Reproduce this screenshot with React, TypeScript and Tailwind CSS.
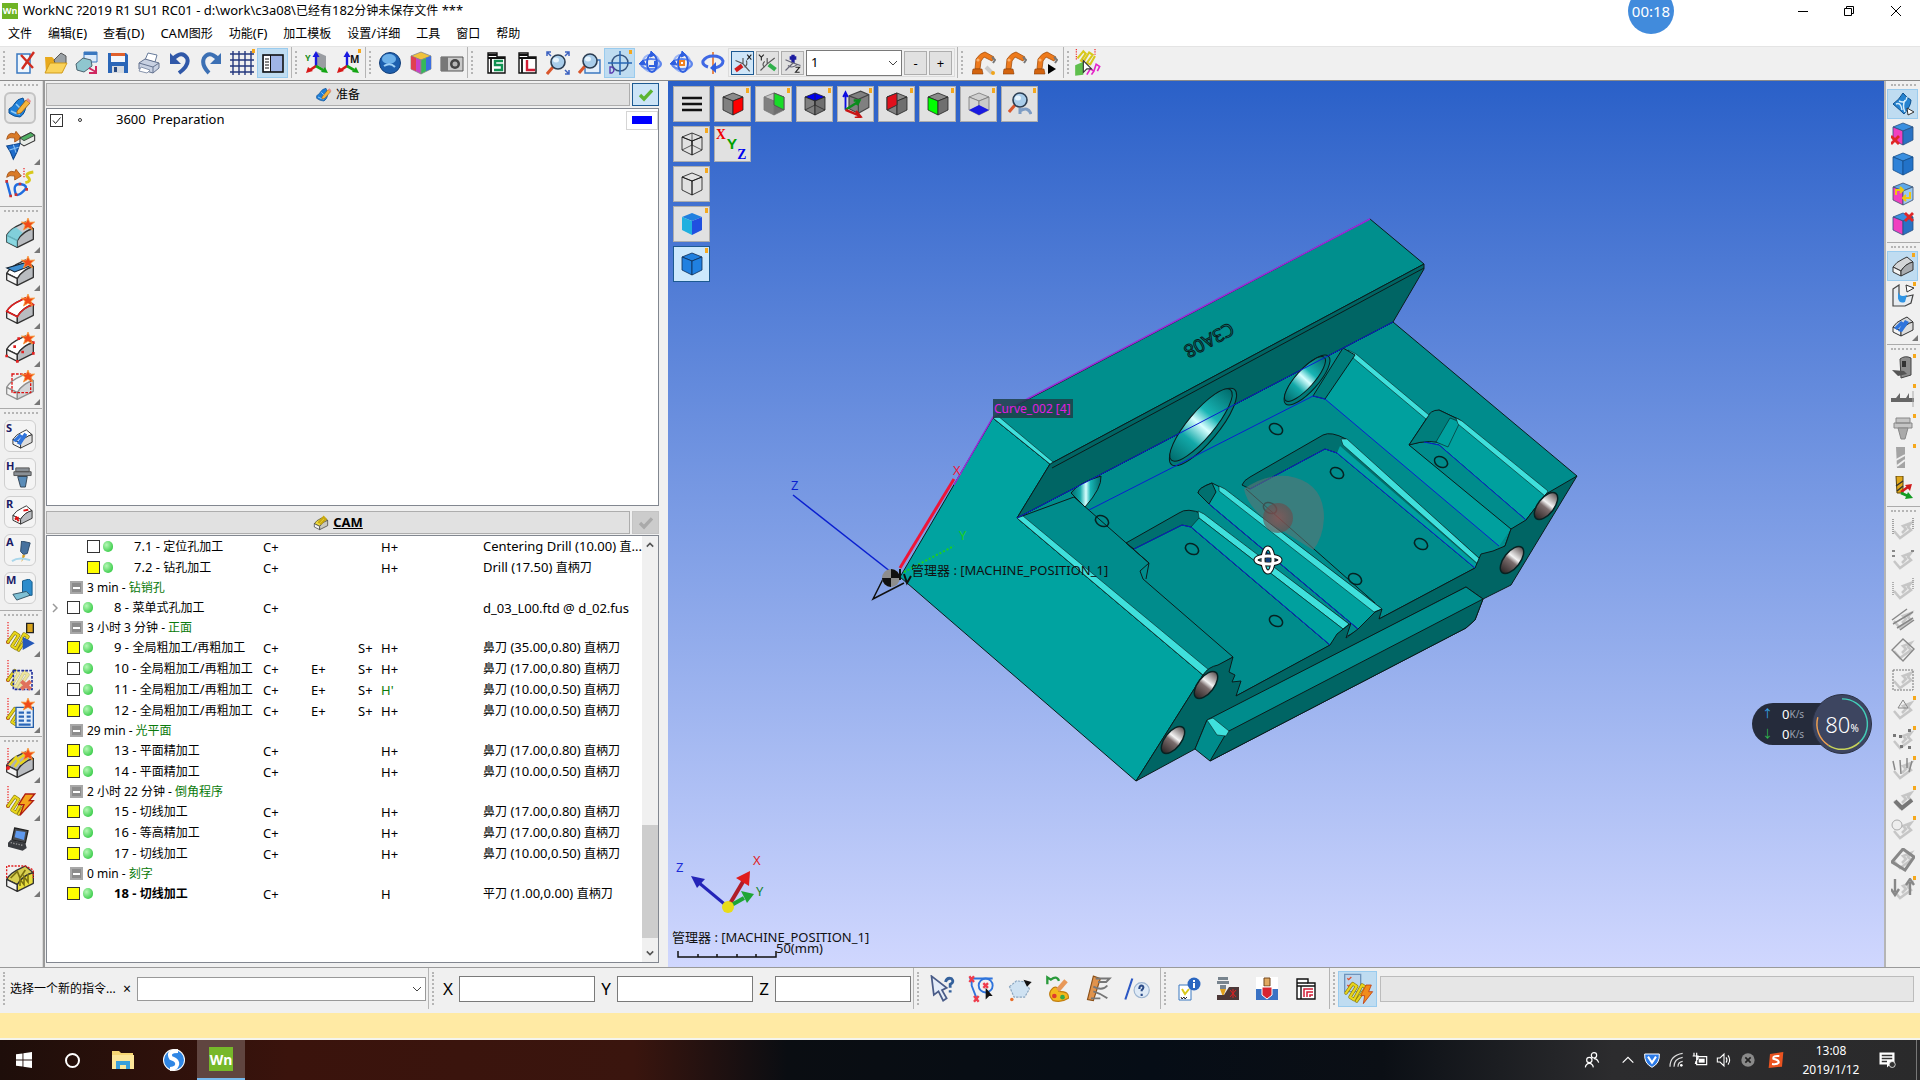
import type { ReactNode } from 'react';

interface Operation {
  kind: 'op';
  no: string;
  name: string;
  filled?: boolean;
  nested?: boolean;
  expandable?: boolean;
  current?: boolean;
  e?: string;
  s?: string;
  h?: string;
  tool: string;
}

interface Group {
  kind: 'group';
  time: string;
  name: string;
}

const rows: (Operation | Group)[] = [
  { kind: 'op', no: '7.1', name: '定位孔加工', nested: true, h: 'H+', tool: 'Centering Drill (10.00) 直...' },
  { kind: 'op', no: '7.2', name: '钻孔加工', nested: true, filled: true, h: 'H+', tool: 'Drill (17.50) 直柄刀' },
  { kind: 'group', time: '3 min', name: '钻销孔' },
  { kind: 'op', no: '8', name: '菜单式孔加工', expandable: true, tool: 'd_03_L00.ftd @ d_02.fus' },
  { kind: 'group', time: '3 小时 3 分钟', name: '正面' },
  { kind: 'op', no: '9', name: '全局粗加工/再粗加工', filled: true, s: 'S+', h: 'H+', tool: '鼻刀 (35.00,0.80) 直柄刀' },
  { kind: 'op', no: '10', name: '全局粗加工/再粗加工', e: 'E+', s: 'S+', h: 'H+', tool: '鼻刀 (17.00,0.80) 直柄刀' },
  { kind: 'op', no: '11', name: '全局粗加工/再粗加工', e: 'E+', s: 'S+', h: "H'", tool: '鼻刀 (10.00,0.50) 直柄刀' },
  { kind: 'op', no: '12', name: '全局粗加工/再粗加工', filled: true, e: 'E+', s: 'S+', h: 'H+', tool: '鼻刀 (10.00,0.50) 直柄刀' },
  { kind: 'group', time: '29 min', name: '光平面' },
  { kind: 'op', no: '13', name: '平面精加工', filled: true, h: 'H+', tool: '鼻刀 (17.00,0.80) 直柄刀' },
  { kind: 'op', no: '14', name: '平面精加工', filled: true, h: 'H+', tool: '鼻刀 (10.00,0.50) 直柄刀' },
  { kind: 'group', time: '2 小时 22 分钟', name: '倒角程序' },
  { kind: 'op', no: '15', name: '切线加工', filled: true, h: 'H+', tool: '鼻刀 (17.00,0.80) 直柄刀' },
  { kind: 'op', no: '16', name: '等高精加工', filled: true, h: 'H+', tool: '鼻刀 (17.00,0.80) 直柄刀' },
  { kind: 'op', no: '17', name: '切线加工', filled: true, h: 'H+', tool: '鼻刀 (10.00,0.50) 直柄刀' },
  { kind: 'group', time: '0 min', name: '刻字' },
  { kind: 'op', no: '18', name: '切线加工', filled: true, current: true, h: 'H', tool: '平刀 (1.00,0.00) 直柄刀' },
];

const menus = ['文件', '编辑(E)', '查看(D)', 'CAM图形', '功能(F)', '加工模板', '设置/详细', '工具', '窗口', '帮助'];

// Chinese runs are set one size smaller than the Latin text around them
function Mixed({ text }: { text: string }) {
  return text.split(/([\u4e00-\u9fff]+)/).map((part, i) =>
    i % 2 ? (
      <span key={i} className="text-[12px]">
        {part}
      </span>
    ) : (
      part
    ),
  );
}

/* ---------- icons ---------- */

function Icon({ children, size = 'size-6' }: { children: ReactNode; size?: string }) {
  return (
    <svg viewBox="0 0 24 24" className={`${size} shrink-0`} fill="none" aria-hidden="true">
      {children}
    </svg>
  );
}

function CubeShape({ top = '#8a8a8a', left = '#808080', right = '#6f6f6f', stroke = '#222' }) {
  return (
    <g stroke={stroke} strokeWidth="0.8" strokeLinejoin="round">
      <path d="M12 1 22 5 12 9 2 5Z" fill={top} />
      <path d="M2 5 12 9V23L2 18Z" fill={left} />
      <path d="M22 5 12 9V23L22 18Z" fill={right} />
    </g>
  );
}

function HiddenEdges() {
  return <path d="M2 18 12 13 22 18M12 13V1" stroke="#222" strokeWidth="0.7" />;
}

function BlockShape({ side = '#fff', front = '#b9bcc0' }) {
  return (
    <g stroke="#333" strokeWidth="1" strokeLinejoin="round">
      <path d="M2 13Q5 8 12 5L16 3 22 8Q14 10 10 17Z" fill={side} />
      <path d="M2 13 10 17V22L2 18Z" fill="#f4f4f4" />
      <path d="M10 17Q14 10 22 8V16L10 22Z" fill={front} />
    </g>
  );
}

const Star = () => (
  <path d="M18 0 19.3 3.2 23 3 20.2 5.4 21.4 9 18 7 14.6 9 15.8 5.4 13 3 16.7 3.2Z" fill="#f04a18" stroke="#f9a03c" strokeWidth="0.6" />
);

function PathShape({ color = '#e8d51c', edge = '#8d7f10' }) {
  return (
    <g strokeLinejoin="round" strokeLinecap="round">
      <path d="M3 15 8 8 11 10 6 18 9 20 15 9 18 11 11 21" stroke={edge} strokeWidth="2.6" />
      <path d="M3 15 8 8 11 10 6 18 9 20 15 9 18 11 11 21" stroke={color} strokeWidth="1.6" />
    </g>
  );
}

const RedGuide = () => (
  <>
    <path d="M3 0V13" stroke="#e33" strokeDasharray="1 1" />
    <circle cx="3" cy="15" r="1.5" fill="#e22" />
  </>
);

const Lens = ({ x = 13, y = 9 }) => (
  <>
    <path d={`M${x - 5} ${y + 5}L${x - 11} ${y + 12}`} stroke="#d9562c" strokeWidth="3" />
    <circle cx={x} cy={y} r="7" fill="#a9cdea" stroke="#2b3d52" strokeWidth="1.6" />
    <ellipse cx={x - 2} cy={y - 2} rx="3" ry="2.5" fill="#e6f3fc" />
  </>
);

const Orbit = ({ dot = false }) => (
  <g stroke="#2f5fe0" strokeWidth="2">
    <circle cx="12" cy="12" r="8.5" stroke="#9db6f4" />
    <ellipse cx="12" cy="13" rx="10" ry="5" stroke="#5f86ec" />
    <ellipse cx="13" cy="12" rx="5" ry="9" />
    <path d="M12 0 16 4 11 6ZM0 13 4 9 7 14Z" fill="#2f5fe0" strokeWidth="1" />
    {dot ? <rect x="10" y="10" width="4" height="4" fill="#fff" stroke="#f08020" /> : <path d="M10 15H16V10" />}
  </g>
);

const Robot = ({ children }: { children?: ReactNode }) => (
  <Icon>
    <path d="M3 18 4 8Q8 2 13 1L22 6 20 10 12 6 9 10 8 18Z" fill="#ee7a1c" stroke="#a4500f" strokeWidth="0.8" />
    <circle cx="6" cy="9" r="1.6" fill="#fbb06c" />
    <path d="M1 18H10L11 23H0Z" fill="#d3640f" stroke="#8a3c08" strokeWidth="0.6" />
    <path d="M20 6 23 9 21 12" stroke="#777" strokeWidth="2" />
    {children}
  </Icon>
);

const Xyz = ({ letter }: { letter?: string }) => (
  <>
    <path d="M11 15V3" stroke="#1a1ae0" strokeWidth="2.4" />
    <path d="M11 0 14.5 6H7.5Z" fill="#1a1ae0" />
    <path d="M11 15 5 19" stroke="#d81818" strokeWidth="2.6" />
    <path d="M1 22 3 16 8 20Z" fill="#d81818" />
    <path d="M11 15 18 19" stroke="#14a514" strokeWidth="2.6" />
    <path d="M23 22 20 16 16 21Z" fill="#14a514" />
    {letter && <text x="14" y="12" fontSize="10" fontWeight="bold" fill="#111">{letter}</text>}
  </>
);

const PenShape = () => (
  <>
    <path d="M1 13Q5 11 7 7T15 2L18 10Q17 18 12 21 6 21 1 17Z" fill="#1e7fd8" stroke="#0c4f94" />
    <path d="M3 15Q8 18 12 18M8 8 13 13" stroke="#8fcaf6" strokeWidth="1.5" />
    <path d="M9 15 18 4 22 7 13 17 9 18Z" fill="#f6b53c" stroke="#9a5c0d" strokeWidth="0.8" />
    <path d="M18 4 20 2 23 5 22 7Z" fill="#e88f8f" />
  </>
);

const Check = ({ color }: { color: string }) => (
  <svg viewBox="0 0 24 24" className="size-4" fill="none" aria-hidden="true">
    <path d="M3 12 9 18 21 5" stroke={color} strokeWidth="5" />
  </svg>
);

const CrossMark = ({ x, y }: { x: number; y: number }) => (
  <path d={`M${x} ${y}l8 8m0-8l-8 8`} stroke="#e02626" strokeWidth="2.8" />
);

const Screen = ({ color, letter }: { color: string; letter: string }) => (
  <Icon>
    <path d="M4 2H13V6H21V22H4Z" fill="#fff" stroke="#111" strokeWidth="1.4" />
    <path d="M4 4H13M4 7H21M7 7V22" stroke="#111" strokeWidth="1.8" />
    <path d={letter === 'S' ? 'M19 10H11V14H18V19H10' : 'M12 9V19H20'} stroke={color} strokeWidth="2.4" />
  </Icon>
);

/* ---------- toolbar pieces ---------- */

function Grip({ vertical = false }: { vertical?: boolean }) {
  return vertical ? (
    <span className="mx-1 my-[3px] block border-t-2 border-dotted border-[#b5b5b5]" />
  ) : (
    <span className="mx-[3px] my-1 block self-stretch border-l-2 border-dotted border-[#b5b5b5]" />
  );
}

function Divider({ vertical = false }: { vertical?: boolean }) {
  return vertical ? (
    <span className="mt-[3px] block h-px w-full shrink-0 bg-[#ababab]" />
  ) : (
    <span className="block w-px shrink-0 self-stretch bg-[#b5b5b5]" />
  );
}

interface ToolProps {
  label: string;
  active?: boolean;
  mark?: boolean;
  corner?: boolean;
  shape: string;
  children: ReactNode;
}

function Tool({ label, active, mark, corner, shape, children }: ToolProps) {
  return (
    <button
      type="button"
      aria-label={label}
      className={`relative flex shrink-0 items-center justify-center ${shape} ${
        active ? 'border border-[#99cbee] bg-[#bfdcf1]' : ''
      }`}
    >
      {children}
      {mark && <span className="absolute top-px right-0.5 h-1 w-[3px] bg-[#f5a81c]" />}
      {corner && (
        <span className="absolute right-0 bottom-0 border-b-[6px] border-l-[6px] border-b-[#777] border-l-transparent" />
      )}
    </button>
  );
}

const TOP = 'h-[30px] w-[31px]';
const LEFT = 'h-[38px] w-10';
const RIGHT = 'h-[30px] w-[31px]';
const BOTTOM = 'h-9 w-[39px]';

function TitleBar() {
  return (
    <header className="relative flex h-[22px] shrink-0 items-center bg-white pl-0.5">
      <span className="flex size-4 items-center justify-center bg-[#6fb424] text-[9px] font-bold text-white">Wn</span>
      <h1 className="ml-[5px] flex-1 text-[13px] whitespace-pre">
        <Mixed text="WorkNC ?2019 R1 SU1 RC01 - d:\work\c3a08\已经有182分钟未保存文件 ***" />
      </h1>
      <div className="flex">
        <button type="button" aria-label="最小化" className="flex h-[22px] w-[46px] items-center justify-center">
          <span className="h-px w-2.5 bg-black" />
        </button>
        <button type="button" aria-label="还原" className="flex h-[22px] w-[46px] items-center justify-center">
          <svg viewBox="0 0 12 12" className="size-3" fill="none" stroke="#000">
            <path d="M1.5 3.5H8.5V10.5H1.5ZM3.5 3.5V1.5H10.5V8.5H8.5" />
          </svg>
        </button>
        <button type="button" aria-label="关闭" className="flex h-[22px] w-12 items-center justify-center">
          <svg viewBox="0 0 12 12" className="size-3" fill="none" stroke="#000">
            <path d="M1 1 11 11M11 1 1 11" />
          </svg>
        </button>
      </div>
      {/* recorder timer floats over the title bar */}
      <div className="absolute -top-3 left-[1628px] z-10 flex size-[46px] items-center justify-center rounded-full bg-[#418bdc] text-[15px] text-white">
        00:18
      </div>
    </header>
  );
}

function MenuBar() {
  return (
    <nav className="flex h-6 shrink-0 items-center gap-4 bg-white pl-2 text-[13px]">
      {menus.map((m) => (
        <button key={m} type="button" className="whitespace-nowrap">
          <Mixed text={m} />
        </button>
      ))}
    </nav>
  );
}

function TopToolbar() {
  return (
    <div className="flex h-[34px] shrink-0 items-center border-t border-[#e4e4e4] bg-[#f0f0f0] pb-0.5">
      <Grip />
      <div className="flex pr-[3px] pl-px">
        <Tool label="新建" shape={TOP}>
          <Icon>
            <path d="M4 3H17V22H4Z" fill="#eef6fd" stroke="#3a78c0" strokeWidth="1.5" />
            <path d="M8 4 20 17M21 1 9 18" stroke="#d02c20" strokeWidth="2.4" />
          </Icon>
        </Tool>
        <Tool label="打开" shape={TOP}>
          <Icon>
            <path d="M1 6H8L10 8H17V22H2Z" fill="#e8a91c" />
            <path d="M10 9 17 2 22 5V12L12 15Z" fill="#9aa1a6" stroke="#555" />
            <path d="M1 22 6 12H23L18 22Z" fill="#fad35a" stroke="#d09a18" />
          </Icon>
        </Tool>
        <Tool label="导出" shape={TOP}>
          <Icon>
            <path d="M9 1H22V11H9Z" fill="#dcebfa" stroke="#3a78c0" />
            <path d="M9 2.5H22" stroke="#3a78c0" strokeWidth="3" />
            <path d="M1 13 8 7 16 9 17 15 9 21 2 19Z" fill="#8fc6cf" stroke="#4b6470" />
            <path d="M14 17 21 21M21 15V22H14" stroke="#d02860" strokeWidth="2" />
          </Icon>
        </Tool>
        <Tool label="保存" shape={TOP}>
          <Icon>
            <path d="M2 2H20L22 4V22H2Z" fill="#2a66b8" />
            <path d="M5 2H19V11H5Z" fill="#f4f7fb" />
            <path d="M5 3.5H19" stroke="#e0602c" strokeWidth="3" />
            <path d="M6 15H18V22H6Z" fill="#d5dae0" />
            <path d="M8 16H11V21H8Z" fill="#2a4a80" />
          </Icon>
        </Tool>
        <Tool label="打印" shape={TOP}>
          <Icon>
            <path d="M8 9 11 2 20 4 18 11Z" fill="#fff" stroke="#667a9a" />
            <path d="M2 12 8 8 22 12V17L16 22 2 18Z" fill="#c8d1e2" stroke="#64738f" />
            <path d="M2 12 16 16V22M16 16 22 12" stroke="#64738f" />
            <path d="M4 16 13 19 10 22 2 20Z" fill="#fff" stroke="#8895ad" />
          </Icon>
        </Tool>
        <Tool label="撤销" shape={TOP}>
          <Icon>
            <path d="M5 8Q14-1 19 7 22 14 11 22" stroke="#3058a8" strokeWidth="4" />
            <path d="M2 2V13H13Z" fill="#3058a8" />
          </Icon>
        </Tool>
        <Tool label="重做" shape={TOP}>
          <Icon>
            <path d="M19 8Q10-1 5 7 2 14 10 22" stroke="#3c70b4" strokeWidth="4" />
            <path d="M22 2V13H11Z" fill="#3c70b4" />
          </Icon>
        </Tool>
        <Tool label="网格" mark shape={TOP}>
          <Icon>
            <path d="M3 0V24M9 0V24M15 0V24M21 0V24M0 3H24M0 9H24M0 15H24M0 21H24" stroke="#25387e" strokeWidth="1.4" />
          </Icon>
        </Tool>
        <Tool label="面板" active shape={TOP}>
          <Icon>
            <rect x="2" y="4" width="20" height="17" fill="#9fb4e6" stroke="#111" strokeWidth="1.6" />
            <rect x="3" y="5" width="6" height="15" fill="#fff" />
            <path d="M4 8H8M4 11H8M4 14H8M4 17H8M9.5 4V21" stroke="#111" />
          </Icon>
        </Tool>
      </div>
      <Divider />
      <Grip />
      <div className="flex pr-0.5 pl-px">
        <Tool label="YZ 视图" shape={TOP}>
          <Icon>
            <path d="M12 1 21 5V19L12 14Z" fill="#9a9da2" />
            <Xyz />
            <text x="0" y="10" fontSize="9" fontWeight="bold" fill="#1b8f1b">Y</text>
          </Icon>
        </Tool>
        <Tool label="机床坐标" mark shape={TOP}>
          <Icon>
            <Xyz letter="M" />
          </Icon>
        </Tool>
      </div>
      <Divider />
      <Grip />
      <div className="flex">
        <Tool label="渲染" shape={TOP}>
          <Icon>
            <circle cx="12" cy="12" r="10.5" fill="#1d5fae" stroke="#123f7a" />
            <ellipse cx="11" cy="8" rx="7" ry="5" fill="#6db1ea" />
            <path d="M6 15Q12 11 17 16" stroke="#9fd0f5" strokeWidth="2" />
          </Icon>
        </Tool>
        <Tool label="颜色" shape={TOP}>
          <Icon>
            <CubeShape top="#f0c23a" left="#c842c8" right="#35b95a" stroke="#888" />
            <path d="M2 5 7 7V20L2 18Z" fill="#e04050" />
            <path d="M17 7 22 5V18L17 20Z" fill="#3b6ee0" />
          </Icon>
        </Tool>
        <Tool label="截图" shape={TOP}>
          <Icon>
            <path d="M1 6H23V20H1Z" fill="#c9c9c9" stroke="#555" />
            <path d="M1 6H8V20H1Z" fill="#777" />
            <circle cx="15" cy="13" r="5" fill="#444" />
            <circle cx="15" cy="13" r="2.5" fill="#b5b5b5" />
          </Icon>
        </Tool>
      </div>
      <Divider />
      <Grip />
      <div className="flex pl-1">
        <Tool label="S 列表" shape={TOP}>
          <Screen color="#0f9150" letter="S" />
        </Tool>
        <Tool label="L 列表" shape={TOP}>
          <Screen color="#d11d34" letter="L" />
        </Tool>
        <Tool label="全部缩放" shape={TOP}>
          <Icon>
            <Lens x={12} y={11} />
            <path d="M1 1 5 5M1 5V1H5M23 1 19 5M19 1H23V5M23 23 19 19M23 19V23H19" stroke="#3b61c0" strokeWidth="1.5" />
          </Icon>
        </Tool>
        <Tool label="窗口缩放" shape={TOP}>
          <Icon>
            <path d="M12 9H23V22H8V17" fill="#e4effa" stroke="#3b78c0" strokeWidth="1.4" />
            <Lens x={13} y={10} />
          </Icon>
        </Tool>
        <Tool label="旋转中心" active mark shape={TOP}>
          <Icon>
            <circle cx="12" cy="12" r="8" stroke="#35537e" strokeWidth="1.5" />
            <path d="M12 0V24M0 12H24" stroke="#2867b5" strokeWidth="1.5" />
            <path d="M2 16H4Q8 19 4 22H2Z" stroke="#5a3ab0" strokeWidth="1.4" />
          </Icon>
        </Tool>
        <Tool label="动态旋转" shape={TOP}>
          <Icon>
            <Orbit />
          </Icon>
        </Tool>
        <Tool label="中心旋转" shape={TOP}>
          <Icon>
            <Orbit dot />
          </Icon>
        </Tool>
        <Tool label="轴旋转" shape={TOP}>
          <Icon>
            <path d="M12 1V23" stroke="#e88a50" strokeWidth="2" />
            <path d="M7 16Q1 14 2 10 5 5 12 5 20 5 22 10 22 15 14 17" stroke="#3f68e4" strokeWidth="3" />
            <path d="M15 11V22L9 17Z" fill="#2f5fe0" />
          </Icon>
        </Tool>
      </div>
      <div className="mr-0.5 flex items-center gap-0.5 border border-[#dcdcdc] px-0.5">
        <button type="button" aria-label="X 轴" className="flex h-6 w-[23px] items-center justify-center border border-[#1d5a92] bg-[#cfe6f8]">
          <Icon size="size-5">
            <path d="M3 21 11 15" stroke="#d21c1c" strokeWidth="5" />
            <path d="M3 9 12 13 20 22M12 13V6M14 17Q18 14 16 9" stroke="#555" strokeWidth="1.4" />
            <path d="M17 2 22 8M22 2 17 8" stroke="#222" strokeWidth="1.3" />
          </Icon>
        </button>
        <button type="button" aria-label="Y 轴" className="flex h-6 w-[23px] items-center justify-center border border-[#adadad] bg-[#e1e1e1]">
          <Icon size="size-5">
            <path d="M13 14 21 20" stroke="#2fb04a" strokeWidth="5" />
            <path d="M3 21 11 13 20 6M11 13V6M8 17Q4 14 8 10" stroke="#555" strokeWidth="1.4" />
            <path d="M1 2 4 5 7 2M4 5V9" stroke="#222" strokeWidth="1.3" />
          </Icon>
        </button>
        <button type="button" aria-label="Z 轴" className="flex h-6 w-[23px] items-center justify-center border border-[#adadad] bg-[#e1e1e1]">
          <Icon size="size-5">
            <path d="M12 12V2M8 6H16" stroke="#1c1ca0" strokeWidth="4" />
            <path d="M3 21 12 12 21 15M3 8 12 12M6 15Q11 19 17 14" stroke="#667" strokeWidth="1.4" />
            <path d="M15 17H20L15 23H20" stroke="#222" strokeWidth="1.3" />
          </Icon>
        </button>
        <span className="relative">
          <select aria-label="旋转步长" className="h-[26px] w-24 appearance-none border border-[#7a7a7a] bg-white pl-1 text-[13px]">
            <option>1</option>
          </select>
          <Chevron />
        </span>
        <button type="button" className="h-6 w-[23px] border border-[#adadad] bg-[#e1e1e1] text-[13px] leading-5">-</button>
        <button type="button" className="h-6 w-[23px] border border-[#adadad] bg-[#e1e1e1] text-[13px] leading-5">+</button>
      </div>
      <Divider />
      <Grip />
      <div className="flex px-0.5">
        <Tool label="机器人设置" shape={TOP}>
          <Robot>
            <path d="M14 16 20 22" stroke="#c9c9c9" strokeWidth="4" />
            <circle cx="21" cy="22" r="2" fill="#f0a51c" />
          </Robot>
        </Tool>
        <Tool label="机器人" shape={TOP}>
          <Robot />
        </Tool>
        <Tool label="机器人模拟" shape={TOP}>
          <Robot>
            <path d="M14 13 22 18 14 23Z" fill="#000" />
          </Robot>
        </Tool>
      </div>
      <Divider />
      <Grip />
      <Tool label="刀路编辑" shape={TOP}>
        <Icon size="size-7">
          <path d="M2 0V10M18 0V6" stroke="#e22" strokeDasharray="1 1" />
          <path d="M3 8 8 2 10 4 6 10 8 11 13 3 16 5 11 12 14 13 18 6" stroke="#d8c81c" strokeWidth="1.8" />
          <path d="M1 23V14L8 11V22Z" fill="#5ebf4c" />
          <path d="M11 22 14 17 17 19 15 22M17 19 19 13 22 15 20 19" stroke="#e324c8" strokeWidth="1.4" />
          <path d="M8 10V20L11 17 15 17Z" fill="#fff" stroke="#333" />
        </Icon>
      </Tool>
    </div>
  );
}

function Chevron() {
  return (
    <svg viewBox="0 0 10 6" className="pointer-events-none absolute top-1/2 right-1 h-1.5 w-2.5 -translate-y-1/2" fill="none" stroke="#444">
      <path d="M1 1 5 5 9 1" />
    </svg>
  );
}

function Letter({ letter, children }: { letter: string; children: ReactNode }) {
  return (
    <span className="flex size-8 items-center justify-center rounded-md border border-[#cfcfcf] bg-[#f4f4f4]">
      <svg viewBox="0 0 30 30" className="size-[30px]" fill="none" aria-hidden="true">
        <svg x="6" y="6" width="23" height="23" viewBox="0 0 24 24">
          {children}
        </svg>
        <text x="1" y="11" fontSize="11" fontWeight="bold" fill="#1b1b66">{letter}</text>
      </svg>
    </span>
  );
}

function LeftToolbar() {
  return (
    <aside className="flex w-[43px] shrink-0 flex-col border-r border-[#d8d8d8] bg-[#f0f0f0]">
      <Grip vertical />
      <Tool label="准备" shape={LEFT}>
        <span className="flex size-8 items-center justify-center rounded-md border-2 border-[#c4c4c4] bg-[#e8e8e8]">
          <Icon>
            <PenShape />
          </Icon>
        </span>
      </Tool>
      <Tool label="转换曲面" corner shape={LEFT}>
        <Icon size="size-8">
          <path d="M2 7Q3 1 8 3L9 1 13 6 8 9 8 6Q4 5 2 7Z" fill="#d97a28" stroke="#a04c10" strokeWidth="0.6" />
          <path d="M12 6 20 2 23 4V8L15 12 12 10Z" fill="#e8ece8" stroke="#333" strokeWidth="0.8" />
          <path d="M12 6 20 2 23 4 15 8Z" fill="#4fae62" stroke="#333" strokeWidth="0.6" />
          <path d="M2 12 12 10Q10 17 7 22Q5 16 2 12Z" fill="#1f6dcc" stroke="#0d458c" strokeWidth="0.8" />
          <path d="M4 15 11 13M7 11 9 17" stroke="#8cc4f4" strokeWidth="0.8" />
        </Icon>
      </Tool>
      <Tool label="转换曲线" shape={LEFT}>
        <Icon size="size-8">
          <path d="M2 7Q3 1 8 3L9 1 13 6 8 9 8 6Q4 5 2 7Z" fill="#d97a28" stroke="#a04c10" strokeWidth="0.6" />
          <path d="M15 0V8" stroke="#e33" strokeDasharray="1 1" />
          <path d="M22 3Q15 4 18 7T16 11" stroke="#d8c81c" strokeWidth="2.2" />
          <path d="M2 10 5 21M9 20Q6 12 12 12 19 13 15 17T9 20Z" stroke="#1f6de0" strokeWidth="1.8" />
          <path d="M1 9h2v2H1zM4 20h2v2H4zM8 19h2v2H8zM11 11h2v2h-2zM16 15h2v2h-2z" fill="#c33" />
        </Icon>
      </Tool>
      <Divider vertical />
      <Grip vertical />
      <Tool label="新建毛坯" corner shape={LEFT}>
        <Icon size="size-8">
          <BlockShape side="#c9cdd2" />
          <path d="M2 13Q5 8 9 7L14 11Q11 14 10 17V22L2 18Z" fill="#6fd0dc" fillOpacity="0.8" />
          <Star />
        </Icon>
      </Tool>
      <Tool label="新建平面" corner shape={LEFT}>
        <Icon size="size-8">
          <BlockShape />
          <path d="M2 9 16 5 21 7 8 12Z" fill="#3f8fd0" stroke="#123" strokeWidth="0.8" />
          <Star />
        </Icon>
      </Tool>
      <Tool label="新建轮廓" corner shape={LEFT}>
        <Icon size="size-8">
          <BlockShape />
          <path d="M2 13Q5 8 12 5L16 3 22 8Q14 10 10 17Z" stroke="#e02020" strokeWidth="1.2" />
          <Star />
        </Icon>
      </Tool>
      <Tool label="新建点" corner shape={LEFT}>
        <Icon size="size-8">
          <BlockShape />
          <path d="M1 17h2v2H1zM9 21h2v2H9zM21 15h2v2h-2zM10 4h2v2h-2zM7 10h2v2H7zM13 14h2v2h-2zM21 7h2v2h-2z" fill="#e02020" />
          <Star />
        </Icon>
      </Tool>
      <Tool label="新建边界" corner shape={LEFT}>
        <Icon size="size-8">
          <g opacity="0.5">
            <BlockShape />
          </g>
          <path d="M6 3H20V17H6Z" stroke="#d11" strokeDasharray="2 1" />
          <Star />
        </Icon>
      </Tool>
      <Divider vertical />
      <Grip vertical />
      <Tool label="曲面" shape={LEFT}>
        <Letter letter="S">
          <BlockShape front="#ddd" />
          <path d="M2 14 9 7 12 9 5 16ZM6 17 14 6 17 8 10 19Z" fill="#2f74dc" />
        </Letter>
      </Tool>
      <Tool label="刀柄" shape={LEFT}>
        <Letter letter="H">
          <path d="M5 3H19V7H5ZM3 7H21V11H3Z" fill="#8a9096" stroke="#555" />
          <path d="M7 12H17L15 23H10Z" fill="#5a8cb8" stroke="#345" />
        </Letter>
      </Tool>
      <Tool label="余料" shape={LEFT}>
        <Letter letter="R">
          <BlockShape />
          <path d="M5 14 8 19M4 17 8 15M13 8 18 7" stroke="#d11" strokeWidth="2" />
        </Letter>
      </Tool>
      <Tool label="刀具" shape={LEFT}>
        <Letter letter="A">
          <path d="M11 0 20 2 17 13 13 14 10 11Z" fill="#46719e" stroke="#2c4a68" />
          <path d="M12 14 15 15 11 22Z" fill="#d8a022" />
          <path d="M1 21Q8 16 20 20" stroke="#a9d6ea" strokeWidth="2" />
        </Letter>
      </Tool>
      <Tool label="机床" shape={LEFT}>
        <Letter letter="M">
          <path d="M12 2 19 0 22 3V17H12Z" fill="#2c8ccc" stroke="#145a8a" />
          <path d="M2 16 16 13 20 17 6 22Z" fill="#7fc0d4" stroke="#356" />
        </Letter>
      </Tool>
      <Divider vertical />
      <Grip vertical />
      <Tool label="模拟刀路" corner shape={LEFT}>
        <Icon size="size-8">
          <RedGuide />
          <PathShape />
          <path d="M17 1H22V8H17Z" fill="#d9a51c" stroke="#222" />
          <path d="M14 11 23 16 14 21Z" fill="#2458b8" />
        </Icon>
      </Tool>
      <Tool label="删除刀路" corner shape={LEFT}>
        <Icon size="size-8">
          <RedGuide />
          <PathShape />
          <path d="M7 8H21V22H7Z" fill="#f0f0f0" fillOpacity="0.6" stroke="#1c2c9c" strokeWidth="1.2" strokeDasharray="2 1" />
          <path d="M13 16 20 22M20 16 13 22" stroke="#e0705c" strokeWidth="3" />
        </Icon>
      </Tool>
      <Tool label="后处理" corner shape={LEFT}>
        <Icon size="size-8">
          <RedGuide />
          <PathShape />
          <path d="M9 7H22V22H9Z" fill="#e2eefb" stroke="#245ea8" />
          <path d="M11 11H15M17 11H20M11 14H15M17 14H20M11 17H15M17 17H20M11 20H20" stroke="#2a66b8" strokeWidth="1.6" />
          <Star />
        </Icon>
      </Tool>
      <Divider vertical />
      <Grip vertical />
      <Tool label="新建刀路" corner shape={LEFT}>
        <Icon size="size-8">
          <BlockShape side="#aeb2b6" />
          <RedGuide />
          <path d="M4 13 9 7 11 10 8 14M11 8 15 5 17 8 12 12" stroke="#e8d51c" strokeWidth="1.8" />
          <Star />
        </Icon>
      </Tool>
      <Tool label="计算" corner shape={LEFT}>
        <Icon size="size-8">
          <RedGuide />
          <PathShape />
          <path d="M16 6H23L19 11H22L12 22 15 14H11Z" fill="#f5a41c" stroke="#b01c10" />
        </Icon>
      </Tool>
      <Tool label="控制台" shape={LEFT}>
        <Icon size="size-8">
          <path d="M8 3 18 5 16 14 6 12Z" fill="#4a4d52" stroke="#222" />
          <path d="M9 5 16 6 15 12 8 10Z" fill="#5f9af0" />
          <path d="M3 14 5 12 16 14 17 18 14 20 3 17Z" fill="#3a3c40" />
          <path d="M5 14 14 16" stroke="#999" strokeDasharray="1 1" />
        </Icon>
      </Tool>
      <Tool label="刀路区域" corner shape={LEFT}>
        <Icon size="size-8">
          <BlockShape side="#d8cf50" front="#e8dd3c" />
          <path d="M5 12 10 7 12 12 16 6M12 18V13L15 17V11L18 15V9" stroke="#7a7010" strokeWidth="1.2" />
          <path d="M2 12V3H16L22 6V12" stroke="#e02020" strokeDasharray="1.5 1" />
        </Icon>
      </Tool>
    </aside>
  );
}

function PanelHeader({ icon, title, active }: { icon: ReactNode; title: ReactNode; active?: boolean }) {
  return (
    <div className="flex h-[23px] shrink-0 gap-0.5">
      <button type="button" className="flex flex-1 items-center justify-center gap-1 border border-[#adadad] bg-[#e1e1e1] text-[13px]">
        {icon}
        {title}
      </button>
      <button
        type="button"
        aria-label="应用"
        className={`flex w-[27px] items-center justify-center border ${
          active ? 'border-[#1d5a92] bg-[#cce4f7]' : 'border-[#c4c4c4] bg-[#cccccc]'
        }`}
      >
        <Check color={active ? '#5cb531' : '#aaaaaa'} />
      </button>
    </div>
  );
}

function OperationRow({ op }: { op: Operation }) {
  return (
    <tr className="h-[21px]">
      <td className="p-0">
        <span className={`flex items-center ${op.nested ? 'pl-10' : 'pl-[5px]'}`}>
          {!op.nested && (
            <span className="flex w-[15px] shrink-0 items-center">
              {op.expandable && (
                <svg viewBox="0 0 6 10" className="h-2.5 w-1.5" fill="none" stroke="#999" strokeWidth="1.5">
                  <path d="M1 1 5 5 1 9" />
                </svg>
              )}
            </span>
          )}
          <input
            type="checkbox"
            aria-label={`${op.no} ${op.name}`}
            className={`size-[13px] shrink-0 appearance-none border border-[#333] ${op.filled ? 'bg-[#ffff00]' : 'bg-white'}`}
          />
          <span className="ml-[3px] h-[11px] w-2.5 shrink-0 rounded-full bg-radial-[at_35%_35%] from-[#b6f7b6] to-[#16c02a]" />
          <span className={`ml-[21px] whitespace-pre ${op.current ? 'font-bold' : ''}`}>
            <Mixed text={`${op.no} - ${op.name}`} />
          </span>
        </span>
      </td>
      <td className="p-0">C+</td>
      <td className="p-0">{op.e}</td>
      <td className="p-0">{op.s}</td>
      <td className={`p-0 ${op.h === "H'" ? 'text-[#0a7a0a]' : ''}`}>{op.h}</td>
      <td className="p-0 whitespace-nowrap">
        <Mixed text={op.tool} />
      </td>
    </tr>
  );
}

function GroupRow({ group }: { group: Group }) {
  return (
    <tr className="h-[19px]">
      <td colSpan={6} className="p-0">
        <span className="flex items-center gap-[3px] pl-[23px] text-[12px] leading-[18px]">
          <span className="flex size-[13px] items-center justify-center border-2 border-[#a8a8a8] bg-[#8c8c8c]">
            <span className="h-0.5 w-[7px] bg-white" />
          </span>
          <span className="ml-px">{group.time} -</span>
          <span className="text-[#0a7a0a]">{group.name}</span>
        </span>
      </td>
    </tr>
  );
}

function SidePanel() {
  return (
    <section className="flex w-[625px] shrink-0 flex-col border-l-2 border-[#9a9a9a] bg-[#f0f0f0] pt-0.5 pr-[9px] pb-1 pl-px">
      <PanelHeader
        active
        icon={
          <Icon size="size-4">
            <PenShape />
          </Icon>
        }
        title={<Mixed text="准备" />}
      />
      <div className="mt-0.5 h-[398px] shrink-0 border border-[#828790] bg-white">
        <div className="flex h-[22px] items-center pl-[3px]">
          <span className="relative flex size-[13px]">
            <input id="prep" type="checkbox" defaultChecked className="size-[13px] appearance-none border border-[#333] bg-white" />
            <svg viewBox="0 0 13 13" className="pointer-events-none absolute inset-0" fill="none" stroke="#222">
              <path d="M3 6.5 5.5 9.5 10.5 3.5" />
            </svg>
          </span>
          <span className="ml-[15px] size-1 rounded-full border border-[#333]" />
          <label htmlFor="prep" className="ml-[34px] flex-1 text-[13px]">
            3600&nbsp; Preparation
          </label>
          <span className="flex h-[19px] w-8 items-center justify-center border border-[#d5d5d5]">
            <span className="h-2 w-5 bg-[#0000ff]" />
          </span>
        </div>
      </div>
      <div className="mt-[5px]">
        <PanelHeader
          icon={
            <Icon size="size-4">
              <BlockShape side="#f0dc40" front="#c8c8c0" />
              <path d="M8 12 16 3 19 6 11 14" stroke="#c8a810" strokeWidth="3" />
            </Icon>
          }
          title={<b className="underline">CAM</b>}
        />
      </div>
      <div className="mt-px flex min-h-0 flex-1 border border-[#828790] bg-white">
        <div className="min-w-0 flex-1 overflow-hidden">
          <table className="w-full table-fixed border-collapse text-[13px] leading-5">
            <colgroup>
              <col className="w-[216px]" />
              <col className="w-12" />
              <col className="w-[47px]" />
              <col className="w-[23px]" />
              <col className="w-[102px]" />
              <col />
            </colgroup>
            <tbody>
              {rows.map((row) =>
                row.kind === 'op' ? <OperationRow key={row.no} op={row} /> : <GroupRow key={row.name} group={row} />,
              )}
            </tbody>
          </table>
        </div>
        <div className="flex w-4 flex-col items-center bg-[#f0f0f0] py-1.5">
          <svg viewBox="0 0 10 6" className="h-1.5 w-2" fill="none" stroke="#555" strokeWidth="2">
            <path d="M1 5 5 1 9 5" />
          </svg>
          <div className="flex-[276]" />
          <div className="w-full flex-[112] bg-[#cdcdcd]" />
          <div className="flex-[12]" />
          <svg viewBox="0 0 10 6" className="h-1.5 w-2" fill="none" stroke="#555" strokeWidth="2">
            <path d="M1 1 5 5 9 1" />
          </svg>
        </div>
      </div>
    </section>
  );
}

/* ---------- 3D view ---------- */

const drillHoles = [
  [434, 441], [524, 469], [602, 428], [608, 349], [669, 393], [773, 382], [753, 464], [687, 499], [608, 541],
];

const endHoles = [[878, 426], [844, 480], [538, 605], [505, 660]];

function Scene() {
  return (
    <svg viewBox="0 1 1216 886" className="absolute inset-0 size-full" fill="none" aria-label="3D 模型">
      <defs>
        <linearGradient id="bore" x1="0" y1="0" x2="1" y2="0">
          <stop offset="0" stopColor="#006c6c" />
          <stop offset="0.3" stopColor="#12a8a8" />
          <stop offset="0.5" stopColor="#d8ffff" />
          <stop offset="0.65" stopColor="#18b4b4" />
          <stop offset="1" stopColor="#006c6c" />
        </linearGradient>
        <linearGradient id="steel" x1="0" y1="0" x2="1" y2="0">
          <stop offset="0" stopColor="#2c2424" />
          <stop offset="0.45" stopColor="#7a6c6c" />
          <stop offset="0.6" stopColor="#f4f4f4" />
          <stop offset="1" stopColor="#5a5050" />
        </linearGradient>
        <radialGradient id="pivot">
          <stop offset="0" stopColor="#a84444" />
          <stop offset="1" stopColor="#6a4a4a" />
        </radialGradient>
      </defs>

      <g stroke="#0b1c1c" strokeWidth="1" strokeLinejoin="round">
        {/* base body */}
        <path d="M349 438 725 242 909 396 858 440 843 449 837 466 815 480 807 488 711 539 568 616 468 701Z" fill="#008c8c" />
        {/* left side face */}
        <path d="M325 338 382 384 349 438 535 595 468 701 232 497Z" fill="#00a3a0" />
        {/* back plate, top and inner faces */}
        <path d="M325 338 702 139 756 184 382 384Z" fill="#008f8d" />
        <path d="M382 384 756 184V189L725 242 349 438Z" fill="#006564" />
        <path d="M384 388 756 188" />
        <path d="M325 338 330 336 385 382 382 384Z" fill="#3fe0dc" strokeWidth="0.6" />
        {/* right wall */}
        <path d="M675 268 687 275 759 338 741 365 843 449 831 466 657 319 645 316Z" fill="#00a09e" stroke="none" />
        <path d="M771 330 792 340 878 414 858 440 771 365 756 362 741 365 759 338Z" fill="#00a09e" />
        <path d="M741 365 843 449 858 440 771 365 756 362Z" fill="#008c8c" stroke="none" />
        <path d="M759 338Q762 330 771 330L792 340 778 365Q764 358 741 365Z" fill="#007e7c" />
        <path d="M782 338 792 342 780 367 768 362Z" fill="#00a09e" strokeWidth="0.6" />
        <path d="M680 270 688 274 761 335 758 339 684 277Z" fill="#3fe0dc" strokeWidth="0.6" />
        <path d="M788 338 794 341 880 411 877 416 790 344Z" fill="#3fe0dc" strokeWidth="0.6" />
        <path d="M675 268 645 316 657 319 687 275Z" fill="#007c7a" />
        <path d="M741 365 843 449" />
        {/* right pocket */}
        <path d="M574 405Q576 400 582 397L655 355Q663 351 678 359L813 480 807 488 669 373 657 369 582 409Z" fill="#00706f" />
        <path d="M673 359 679 359 813 480 811 485 675 365Z" fill="#3fe0dc" strokeWidth="0.6" />
        <path d="M672 366 811 486 807 488 669 373Z" fill="#00a09e" stroke="none" />
        <path d="M578 409 707 523" />
        {/* middle slot */}
        <path d="M530 413Q530 408 544 403L556 409 714 529 707 532 690 549 541 424Z" fill="#00a09e" />
        <path d="M530 413Q530 408 544 403L548 412 541 424Z" fill="#00706f" />
        <path d="M551 406 557 409 714 529 706 532 551 411Z" fill="#3fe0dc" strokeWidth="0.6" />
        {/* left pocket */}
        <path d="M458 463 511 433Q519 427 535 434L681 544 662 565 523 447 514 445 466 469Z" fill="#00706f" />
        <path d="M530 431 536 434 681 544 675 549 531 438Z" fill="#3fe0dc" strokeWidth="0.6" />
        <path d="M531 438 675 549 662 565 523 447Z" fill="#00a09e" strokeWidth="0.6" />
        {/* left wall */}
        <path d="M406 417 481 483 472 491 475 499 565 577 535 595 349 438Z" fill="#008c8c" />
        <path d="M481 483 478 499M458 463 481 483" />
        <path d="M349 438 355 436 541 590 535 595Z" fill="#3fe0dc" strokeWidth="0.6" />
        {/* front face */}
        <path
          d="M468 701 535 595Q540 587 550 585L565 577 561 592 567 595 564 602 573 601 568 616 662 565 669 554 683 543 678 558 690 549 707 532 714 529 711 539 807 488 813 474 825 471 837 466 843 449 858 440 878 414 909 396 843 505 815 519 798 507 545 638 539 640 527 669Z"
          fill="#006564"
        />
        <path d="M798 507 815 519 807 540 798 548 542 681 527 669 539 640Z" fill="#008c8c" />
        <path d="M815 519 559 652 542 681 798 548 807 540Z" fill="#006564" />
        <path d="M539 640 545 638 561 651 558 656 549 655Z" fill="#3fe0dc" strokeWidth="0.6" />
      </g>

      {/* bores through the back plate */}
      <g fill="url(#bore)" stroke="#0b1c1c">
        <ellipse cx="535" cy="347" rx="49" ry="15" fill="#007a79" transform="rotate(-50 535 347)" />
        <ellipse cx="533" cy="345" rx="46" ry="13" transform="rotate(-50 533 345)" />
        <ellipse cx="639" cy="300" rx="32" ry="11" fill="#007a79" transform="rotate(-48 639 300)" />
        <ellipse cx="637" cy="299" rx="29" ry="9" transform="rotate(-48 637 299)" />
        <path d="M403 413Q410 403 433 396 434 408 417 427Z" />
      </g>
      <path d="M349 438 725 242M421 430 645 316 657 319 831 466M582 409 657 369 669 373 807 488M466 469 514 445 523 447 662 565M541 424 690 549M756 362 771 365 858 440" stroke="#0a1fd0" />

      <g stroke="#062222" strokeWidth="1.5">
        {drillHoles.map(([x, y]) => (
          <ellipse key={`${x}-${y}`} cx={x} cy={y} rx="7" ry="5" transform={`rotate(30 ${x} ${y})`} />
        ))}
        {endHoles.map(([x, y]) => (
          <ellipse key={`${x}-${y}`} cx={x} cy={y} rx="16" ry="8" fill="url(#steel)" transform={`rotate(-52 ${x} ${y})`} />
        ))}
      </g>

      <text x="-25" y="7" fontSize="18" stroke="#0b1c1c" strokeWidth="1" transform="translate(543 260) rotate(152)">C3A08</text>

      {/* selected curve */}
      <path d="M702 139 325 337 286 405" stroke="#9a2bd8" strokeWidth="1.5" />
      <rect x="325" y="319" width="80" height="19" fill="#1c3f48" fillOpacity="0.85" />
      <text x="326" y="333" fontSize="12" fill="#e21be2">Curve_002 [4]</text>

      {/* rotation pivot */}
      <path d="M576 409Q596 394 620 396 656 402 656 438 655 458 645 470L610 448Q580 430 576 409Z" fill="#5f7474" fillOpacity="0.6" />
      <circle cx="610" cy="438" r="15" fill="url(#pivot)" fillOpacity="0.6" />
      <g stroke="#111" strokeWidth="5">
        <ellipse cx="600" cy="480" rx="5" ry="12" />
        <ellipse cx="600" cy="480" rx="12" ry="4" />
      </g>
      <g stroke="#fff" strokeWidth="3">
        <ellipse cx="600" cy="480" rx="5" ry="12" />
        <ellipse cx="600" cy="480" rx="12" ry="4" />
      </g>
      <path d="M598 478h4v4h-4z" fill="#123c78" />

      {/* machine origin */}
      <path d="M125 415 223 492" stroke="#0a1fd0" strokeWidth="1.5" />
      <path d="M232 488 286 399" stroke="#ef1438" strokeWidth="3" />
      <path d="M236 492 286 466" stroke="#1ed01e" strokeWidth="2" strokeDasharray="2 2" />
      <path d="M216 497 205 519 236 503" stroke="#111" strokeWidth="1.5" />
      <circle cx="223" cy="498" r="9" fill="#8d8d8d" />
      <path d="M223 498V489A9 9 0 0 1 232 498ZM223 498V507A9 9 0 0 1 214 498Z" fill="#111" />
      <path d="M232 489V500M236 494 239 503 243 496" stroke="#111" strokeWidth="2" />
      <g fontSize="13">
        <text x="123" y="410" fill="#0a1fd0">Z</text>
        <text x="285" y="395" fill="#ef1438">X</text>
        <text x="291" y="460" fill="#1ed01e">Y</text>
        <text x="243" y="495" fill="#111">管理器 : [MACHINE_POSITION_1]</text>
      </g>

      {/* orientation triad */}
      <path d="M60 827 30 802" stroke="#2424b8" strokeWidth="3" />
      <path d="M23 796 37 799 29 808Z" fill="#2424b8" />
      <path d="M60 827 76 800" stroke="#b01c28" strokeWidth="4" />
      <path d="M82 791 68 798 81 806Z" fill="#e01c1c" />
      <path d="M60 827 76 818" stroke="#1ea534" strokeWidth="4" />
      <path d="M86 814 73 811 79 823Z" fill="#1ea534" />
      <circle cx="60" cy="827" r="6" fill="#e8dc18" />
      <g fontSize="13">
        <text x="8" y="792" fill="#1c2cd8">Z</text>
        <text x="85" y="785" fill="#e01c1c">X</text>
        <text x="88" y="816" fill="#14862a">Y</text>
        <text x="4" y="862" fill="#111">管理器 : [MACHINE_POSITION_1]</text>
        <text x="108" y="873" fill="#111">50(mm)</text>
      </g>
      <path d="M10 871V877H108V871M30 874V877M49 874V877M69 874V877M88 874V877" stroke="#111" strokeWidth="1.5" />
    </svg>
  );
}

function ViewButton({ label, active, mark = true, children }: { label: string; active?: boolean; mark?: boolean; children: ReactNode }) {
  return (
    <button
      type="button"
      aria-label={label}
      className={`relative flex h-9 w-[37px] items-center justify-center border ${
        active ? 'border-[#1d5a92] bg-[#cce8fc]' : 'border-[#adadad] bg-[#e1e1e1]'
      }`}
    >
      {children}
      {mark && <span className="absolute top-px right-px h-[5px] w-[3px] bg-[#f5a81c]" />}
    </button>
  );
}

function NetMeter() {
  return (
    <div className="absolute top-[613px] right-3 flex items-center">
      <div className="-mr-3.5 flex h-[42px] w-[74px] flex-col justify-center rounded-l-full bg-[#252b3b] pl-2.5 text-[13px] leading-5 text-white">
        <span className="flex items-center">
          <span className="w-5 text-[11px] text-[#35a8f0]">↑</span>0<span className="text-[10px] text-[#9ba1b0]">K/s</span>
        </span>
        <span className="flex items-center">
          <span className="w-5 text-[11px] text-[#2fb94c]">↓</span>0<span className="text-[10px] text-[#9ba1b0]">K/s</span>
        </span>
      </div>
      <div className="relative flex size-[60px] items-center justify-center rounded-full border border-[#2b3144] bg-[#3d4560] text-white">
        <svg viewBox="0 0 60 60" className="absolute inset-0" fill="none" strokeWidth="1.5">
          <path d="M30 4A26 26 0 0 1 48 49" stroke="#43cdb8" />
          <path d="M48 49A26 26 0 0 1 16 52" stroke="#c8d45a" />
          <path d="M16 52A26 26 0 0 1 5 23" stroke="#f0a050" />
        </svg>
        <span className="text-[22px] font-light">80</span>
        <span className="mt-2 text-[10px]">%</span>
      </div>
    </div>
  );
}

function Viewport() {
  return (
    <main className="relative min-w-0 flex-1 overflow-hidden bg-linear-to-b from-[#2a60c8] to-[#d0d7fe]">
      <Scene />
      <div className="relative flex w-fit flex-col gap-1 pt-[5px] pl-[5px]">
        <div className="flex gap-1">
          <ViewButton label="菜单" mark={false}>
            <Icon>
              <path d="M2 6H22M2 12H22M2 18H22" stroke="#111" strokeWidth="2.5" />
            </Icon>
          </ViewButton>
          <ViewButton label="右视图">
            <Icon><CubeShape right="#ff0000" /></Icon>
          </ViewButton>
          <ViewButton label="后视图">
            <Icon>
              <CubeShape top="#c4c4c4" stroke="#777" />
              <path d="M12 1 22 5V18L12 13Z" fill="#18dc28" stroke="#555" />
            </Icon>
          </ViewButton>
          <ViewButton label="俯视图">
            <Icon><CubeShape top="#0000f0" /><HiddenEdges /></Icon>
          </ViewButton>
          <ViewButton label="等轴视图">
            <Icon size="size-7">
              <path d="M6 5 16 1 23 4V15L14 20 6 16Z" fill="#808080" stroke="#444" />
              <path d="M6 5 14 8 23 4M14 8V20" stroke="#444" />
              <path d="M3 17V4M1 6 3 2 5 6" stroke="#0c0ce0" strokeWidth="1.6" />
              <path d="M3 17 14 10M10 9 15 9 13 13" stroke="#0a8c1c" strokeWidth="2" />
              <path d="M3 17 15 22M12 18 16 23 11 24" stroke="#c81414" strokeWidth="2" />
            </Icon>
          </ViewButton>
          <ViewButton label="左视图">
            <Icon>
              <CubeShape />
              <path d="M2 5 12 1V13L2 18Z" fill="#e0101c" stroke="#333" />
            </Icon>
          </ViewButton>
          <ViewButton label="前视图">
            <Icon><CubeShape left="#00ff00" /></Icon>
          </ViewButton>
          <ViewButton label="仰视图">
            <Icon>
              <CubeShape top="#d0d0d0" left="#d4d4d4" right="#cacaca" stroke="#777" />
              <path d="M2 18 12 13 22 18 12 23Z" fill="#1a1ae0" />
            </Icon>
          </ViewButton>
          <ViewButton label="上一视图">
            <Icon>
              <Lens x={12} y={8} />
              <path d="M12 16V22M12 19Q20 14 23 22" stroke="#7d9cc4" strokeWidth="3" />
            </Icon>
          </ViewButton>
        </div>
        <div className="flex gap-1">
          <ViewButton label="线框">
            <Icon><CubeShape top="none" left="none" right="none" stroke="#111" /><HiddenEdges /></Icon>
          </ViewButton>
          <ViewButton label="坐标" mark={false}>
            <svg viewBox="0 0 36 36" className="size-[35px] font-['Liberation_Serif',serif]" fontSize="14" fontWeight="bold" aria-hidden="true">
              <text x="1" y="12" fill="#f00000">X</text>
              <text x="12" y="23" fontFamily="Liberation Sans" fontSize="16" fill="#00a000">Y</text>
              <text x="23" y="33" fill="#0000f0">Z</text>
            </svg>
          </ViewButton>
        </div>
        <ViewButton label="隐藏线">
          <Icon><CubeShape top="none" left="none" right="none" stroke="#111" /></Icon>
        </ViewButton>
        <ViewButton label="着色">
          <Icon><CubeShape top="#2080e0" left="#20b0e0" right="#2050e0" stroke="none" /></Icon>
        </ViewButton>
        <ViewButton label="带边着色" active>
          <Icon><CubeShape top="#2080e0" left="#2080e0" right="#2080e0" stroke="#0c2c54" /></Icon>
        </ViewButton>
      </div>
      <NetMeter />
    </main>
  );
}

/* disabled toolpath icons share one faded stroke, each adds its own overlay */
const pathTools: { label: string; mark?: boolean; overlay: ReactNode }[] = [
  { label: '显示刀路', overlay: <path d="M2 1V17M22 0V12" stroke="#888" strokeWidth="1.5" strokeDasharray="1 1" /> },
  { label: '刀路点', overlay: <path d="M1 2h3v2H1zM1 7h3v2H1zM20 2h3v2h-3z" fill="#888" /> },
  { label: '快速移动', overlay: <path d="M2 4V17M22 0V12" stroke="#999" strokeWidth="1.5" strokeDasharray="1 1" /> },
  { label: '平行刀路', overlay: <path d="M1 12 16 1M2 16 22 4M6 20 22 10M9 22 23 12" stroke="#888" strokeWidth="1.5" /> },
  { label: '边界', overlay: <path d="M12 1 23 11 12 23 1 12Z" stroke="#888" strokeWidth="1.4" /> },
  { label: '框选', overlay: <path d="M2 2H22V22H2Z" stroke="#777" strokeDasharray="2 1" /> },
  { label: '方向', mark: true, overlay: <path d="M12 2 7 10H17Z" stroke="#888" /> },
  { label: '节点', mark: true, overlay: <path d="M2 6h3v3H2zM9 17h3v3H9zM17 18h3v3h-3zM8 7h3v3H8zM17 1h3v3h-3z" fill="#777" /> },
  { label: '矢量', mark: true, overlay: <path d="M2 3 4 12M9 2 10 16M16 0V10M21 3 18 14" stroke="#888" strokeWidth="1.5" /> },
  { label: '接近', mark: true, overlay: <path d="M4 13 11 20 21 12" stroke="#777" strokeWidth="4" /> },
  { label: '刷新', mark: true, overlay: <circle cx="6" cy="7" r="5" fill="#eee" stroke="#aaa" /> },
  { label: '区域', overlay: <path d="M12 1 23 9 14 22 1 14Z" stroke="#888" strokeWidth="3" /> },
  { label: '交换', mark: true, overlay: <path d="M4 1V14M0 11 4 17 8 11M19 17V4M15 7 19 1 23 7" stroke="#888" strokeWidth="2.4" /> },
];

function RightToolbar() {
  return (
    <aside className="flex w-9 shrink-0 flex-col border-l-2 border-[#b5b5b5] bg-[#f0f0f0] pl-px">
      <Grip vertical />
      <Tool label="选择曲面" active shape={RIGHT}>
        <Icon>
          <path d="M2 12Q8 8 12 1 16 6 20 8 20 14 13 22 9 18 2 12Z" fill="#2683d0" stroke="#0d4f8c" />
          <path d="M5 12Q10 10 11 18M8 9Q15 12 16 5M14 8Q11 14 14 20" stroke="#d3ecfb" strokeWidth="1.5" />
          <path d="M16 16 23 20 17 23Z" fill="#fff" stroke="#333" />
        </Icon>
      </Tool>
      <Tool label="取消选择" shape={RIGHT}>
        <Icon><CubeShape top="#3a8fe0" left="#f040c0" right="#2a72c4" stroke="#2a5080" /><CrossMark x={0} y={14} /></Icon>
      </Tool>
      <Tool label="显示全部" shape={RIGHT}>
        <Icon><CubeShape top="#3a8fe0" left="#2f82d8" right="#2272c8" stroke="#144c88" /></Icon>
      </Tool>
      <Tool label="反向选择" shape={RIGHT}>
        <Icon>
          <CubeShape top="#5ea8e8" left="#f040c0" right="#9cc8f0" stroke="#3a5070" />
          <path d="M5 13V8H11M9 5 12 8 9 11M19 10V16H12M15 13 12 16 15 19" stroke="#f0c810" strokeWidth="2" />
        </Icon>
      </Tool>
      <Tool label="删除选择" shape={RIGHT}>
        <Icon><CubeShape top="#3a8fe0" left="#f040c0" right="#2a72c4" stroke="#2a5080" /><CrossMark x={14} y={1} /></Icon>
      </Tool>
      <Divider vertical />
      <Grip vertical />
      <Tool label="显示毛坯" active mark shape={RIGHT}>
        <Icon><BlockShape side="#d4d6d8" front="#a9acb0" /></Icon>
      </Tool>
      <Tool label="显示圆角" mark shape={RIGHT}>
        <Icon>
          <path d="M2 5 8 1V14L22 11 20 19 14 22H2Z" fill="#e8ecf0" stroke="#444" strokeWidth="1.2" />
          <path d="M7 8Q9 14 16 11L14 18Q8 20 7 14Z" fill="#2f94e4" />
          <path d="M15 1 23 4 16 8Z" fill="#fff" stroke="#333" />
        </Icon>
      </Tool>
      <Tool label="显示曲面" corner shape={RIGHT}>
        <Icon><BlockShape side="#d4d6d8" front="#ddd" /><path d="M3 14 10 7 13 9 6 16ZM7 17 14 6 18 8 11 18Z" fill="#2f74dc" /></Icon>
      </Tool>
      <Divider vertical />
      <Grip vertical />
      <Tool label="显示机床" mark shape={RIGHT}>
        <Icon>
          <path d="M9 3Q14-1 20 2V19L10 22Z" fill="#8c8c8c" stroke="#444" />
          <path d="M11 5H15V11H11Z" fill="#333" />
          <path d="M1 14 13 15 16 18 7 20Z" fill="#555" />
        </Icon>
      </Tool>
      <Tool label="显示夹具" mark shape={RIGHT}>
        <Icon><path d="M0 12H5L9 7V12H15L18 7V12H23V16H0Z" fill="#666" /><path d="M22 5V21" stroke="#aaa" /></Icon>
      </Tool>
      <Tool label="显示刀柄" mark shape={RIGHT}>
        <Icon><path d="M5 2H19V7H5ZM3 7H21V12H3Z" fill="#c4c4c4" stroke="#888" /><path d="M7 12H17L14 23H10Z" fill="#aaa" stroke="#888" /></Icon>
      </Tool>
      <Tool label="显示刀具" mark shape={RIGHT}>
        <Icon><path d="M5 1H14V22H6Z" fill="#a4a4a4" /><path d="M5 14 14 9M6 20 14 14" stroke="#eee" strokeWidth="2" /></Icon>
      </Tool>
      <Tool label="刀具坐标" shape={RIGHT}>
        <Icon>
          <path d="M5 0H12V17H6Z" fill="#e0a81c" stroke="#5c4408" />
          <path d="M5 10 12 5M6 15 12 10" stroke="#333" strokeWidth="1.5" />
          <path d="M10 16 17 11" stroke="#d01c1c" strokeWidth="2.6" />
          <path d="M14 9 21 8 19 15Z" fill="#d01c1c" />
          <path d="M10 17 17 20" stroke="#149c24" strokeWidth="2.6" />
          <path d="M17 16 22 22 14 23Z" fill="#149c24" />
        </Icon>
      </Tool>
      <Divider vertical />
      <Grip vertical />
      {pathTools.map((t) => (
        <Tool key={t.label} label={t.label} mark={t.mark} shape={RIGHT}>
          <Icon>
            <g opacity="0.7">
              <path d="M3 13 9 20 20 12 17 9 20 5 12 8 15 11 11 15" stroke="#b4b4b4" strokeWidth="2.5" />
            </g>
            {t.overlay}
          </Icon>
        </Tool>
      ))}
    </aside>
  );
}

function CoordInput({ axis }: { axis: string }) {
  return (
    <label className="flex items-center">
      <span className="w-[22px] text-center text-[17px]">{axis}</span>
      <input type="text" className="h-[26px] w-[136px] border border-[#7a7a7a] bg-white px-1 text-[13px]" />
    </label>
  );
}

function CommandBar() {
  return (
    <div className="flex h-[46px] shrink-0 items-center border-t border-[#9a9a9a] bg-[#f0f0f0] pb-1">
      <Grip />
      <label htmlFor="command" className="w-[109px] pl-0.5 text-[12px] whitespace-nowrap">选择一个新的指令...</label>
      <button type="button" aria-label="取消指令" className="w-5 text-[14px]">×</button>
      <span className="relative mr-0.5">
        <select id="command" className="h-6 w-[289px] appearance-none border border-[#999] bg-white text-[13px]" />
        <Chevron />
      </span>
      <Divider />
      <Grip />
      <div className="flex pr-0.5">
        <CoordInput axis="X" />
        <CoordInput axis="Y" />
        <CoordInput axis="Z" />
      </div>
      <Divider />
      <Grip />
      <div className="flex pr-1">
        <Tool label="帮助指针" shape={BOTTOM}>
          <Icon size="size-7">
            <path d="M3 1 5 17 9 14 13 22 16 20 12 13 16 11Z" fill="#e4ecf8" stroke="#4a5c88" strokeWidth="1.5" />
            <path d="M15 6Q16 2 20 3 23 6 19 8V11M19 13V15" stroke="#34619c" strokeWidth="2.4" />
          </Icon>
        </Tool>
        <Tool label="选择曲线" shape={BOTTOM}>
          <Icon size="size-7">
            <path d="M2 3H22M4 3V9L9 22" stroke="#2f74dc" strokeWidth="1.6" />
            <circle cx="16" cy="9" r="6" stroke="#2f74dc" strokeWidth="1.6" />
            <path d="M2 1 6 6M6 1 2 6M14 7 18 11M18 7 14 11M6 18 10 23M10 18 6 23" stroke="#ef3c4c" strokeWidth="2" />
            <path d="M16 11V21L19 18H22Z" fill="#111" />
          </Icon>
        </Tool>
        <Tool label="选择区域" shape={BOTTOM}>
          <Icon size="size-7">
            <path d="M3 10 9 5 17 6 20 12 16 19 7 19Z" fill="#cfe2f2" stroke="#8aa6c0" strokeDasharray="2 1" />
            <path d="M15 4 22 6 18 10Z" fill="#111" />
            <circle cx="5" cy="21" r="1.5" fill="#e8702c" />
          </Icon>
        </Tool>
        <Tool label="调色板" shape={BOTTOM}>
          <Icon size="size-7">
            <path d="M7 22Q1 16 7 11 11 9 12 14 21 14 20 20 14 24 7 22Z" fill="#f4b81c" stroke="#c07c10" />
            <circle cx="8" cy="18" r="2" fill="#e03a2c" />
            <circle cx="15" cy="19" r="2" fill="#35a84a" />
            <path d="M11 13 18 5" stroke="#e89858" strokeWidth="4" />
            <path d="M2 8V2L5 4Q10 0 12 5" stroke="#2a9a3c" strokeWidth="2" />
          </Icon>
        </Tool>
        <Tool label="测量" shape={BOTTOM}>
          <Icon size="size-7">
            <path d="M8 1 14 3 8 22 3 21Z" fill="#e0934c" stroke="#8a5018" />
            <path d="M10 3H22L19 6H12M8 10Q16 14 20 9M8 14Q15 16 20 20M6 20H14" stroke="#777" strokeWidth="1.6" />
          </Icon>
        </Tool>
        <Tool label="查询" shape={BOTTOM}>
          <Icon size="size-7">
            <path d="M8 3 2 21" stroke="#2c58c4" strokeWidth="1.8" />
            <circle cx="16" cy="13" r="6.5" fill="#dfeaf6" stroke="#9cb4d0" />
            <path d="M14 12Q14 9 16 9 19 10 16 13V14M16 16V18" stroke="#2c4c88" strokeWidth="1.8" />
          </Icon>
        </Tool>
      </div>
      <Divider />
      <Grip />
      <div className="flex pr-1">
        <Tool label="刀具信息" shape={BOTTOM}>
          <Icon>
            <path d="M2 8H14V23H2Z" fill="#fff" stroke="#3a78c0" />
            <path d="M5 12 8 17 12 12" stroke="#d8c81c" strokeWidth="2" />
            <path d="M4 20 5 22 7 20 8 22 10 20" stroke="#223" />
            <circle cx="17" cy="7" r="6.5" fill="#2a66c0" />
            <path d="M17 3V5M17 6V11" stroke="#fff" strokeWidth="2" />
          </Icon>
        </Tool>
        <Tool label="碰撞检查" shape={BOTTOM}>
          <Icon>
            <path d="M2 0H12V3H2ZM1 4H13V7H1ZM4 8H10V12H4Z" fill="#78848e" />
            <path d="M4 12H10L7 20Z" fill="#e0a01c" />
            <path d="M1 18H8L13 10H23V23H1Z" fill="#4c3838" />
            <path d="M14 13 20 20M20 13 14 20M17 12V21" stroke="#e02020" />
          </Icon>
        </Tool>
        <Tool label="刀具长度" shape={BOTTOM}>
          <Icon>
            <path d="M1 0H23V12H1Z" fill="#fff" />
            <path d="M1 12H23V23H1Z" fill="#3a72c4" />
            <path d="M9 1H15V9H9Z" fill="#e0a860" stroke="#70441c" />
            <path d="M7 10H17V18L12 22 7 18Z" fill="#d82430" stroke="#fff" />
          </Icon>
        </Tool>
        <Tool label="刀路列表" shape={BOTTOM}>
          <Icon>
            <path d="M3 2H14V6H21V22H3Z" fill="#fff" stroke="#111" strokeWidth="1.4" />
            <path d="M3 6H14M3 9H21M7 9V22" stroke="#111" strokeWidth="1.4" />
            <path d="M10 20V12H19M13 20V15H19M16 20V18H19" stroke="#d11d34" strokeWidth="1.5" />
          </Icon>
        </Tool>
      </div>
      <Divider />
      <Grip />
      <Tool label="批处理" active shape={BOTTOM}>
        <Icon size="size-8">
          <path d="M2 1H14V14H2Z" fill="#bcd4ec" stroke="#6e94bc" />
          <path d="M4 4 5 5 7 3M4 9 5 10 7 8" stroke="#e05030" />
          <PathShape />
          <path d="M18 9H22L20 14H23L16 23 17 17H14Z" fill="#f08c1c" stroke="#c03810" strokeWidth="0.6" />
        </Icon>
      </Tool>
      <div className="mr-1.5 ml-[3px] h-[26px] flex-1 border border-[#bcbcbc] bg-[#e6e6e6]" />
    </div>
  );
}

function Taskbar() {
  return (
    <footer className="flex h-10 shrink-0 items-center bg-[linear-gradient(90deg,#1e0e0a_0%,#3a130c_15%,#3a150e_33%,#0a0d12_41%,#060d16_60%,#0b0f15_72%,#2c2c2e_84%,#2a2a2b_100%)] text-white">
      <button type="button" aria-label="开始" className="flex h-10 w-12 items-center justify-center">
        <svg viewBox="0 0 16 16" className="size-4" fill="#fff">
          <path d="M0 2.3 6.5 1.4V7.6H0ZM7.4 1.3 16 0V7.6H7.4ZM0 8.4H6.5V14.6L0 13.7ZM7.4 8.4H16V16L7.4 14.7Z" />
        </svg>
      </button>
      <button type="button" aria-label="Cortana" className="flex h-10 w-12 items-center justify-center">
        <span className="size-[15px] rounded-full border-2 border-white" />
      </button>
      <button type="button" aria-label="文件资源管理器" className="flex h-10 w-[54px] items-center justify-center">
        <Icon>
          <path d="M1 3H8L10 5H22V21H1Z" fill="#f7d774" />
          <path d="M1 7H23V21H1Z" fill="#fde79a" />
          <path d="M5 21V13H19V21H15V17H9V21Z" fill="#3aa0dc" />
        </Icon>
      </button>
      <button type="button" aria-label="搜狗浏览器" className="flex h-10 w-[47px] items-center justify-center">
        <Icon>
          <circle cx="12" cy="12" r="11" fill="#fff" />
          <circle cx="12" cy="12" r="10" fill="#2f86e4" />
          <path d="M16 3Q5 3 9 10 18 13 14 19 12 21 8 21" stroke="#fff" strokeWidth="4" />
        </Icon>
      </button>
      <button type="button" aria-label="WorkNC" className="flex h-10 w-12 items-center justify-center border-b-2 border-[#76b9ed] bg-[#604540]">
        <span className="flex size-6 items-center justify-center bg-[#76b82a] text-[14px] font-bold">Wn</span>
      </button>
      <div className="flex-1" />
      <div className="flex items-center gap-2">
        <Icon size="mr-3 size-4">
          <circle cx="15" cy="5" r="4" stroke="#fff" strokeWidth="1.8" />
          <circle cx="8" cy="12" r="4" stroke="#fff" strokeWidth="1.8" />
          <path d="M2 23Q3 17 8 17 13 17 14 23M15 10Q20 10 22 16" stroke="#fff" strokeWidth="1.8" />
        </Icon>
        <Icon size="size-4"><path d="M4 16 12 8 20 16" stroke="#fff" strokeWidth="1.8" /></Icon>
        <Icon size="size-4"><path d="M1 3H23Q24 17 12 23 0 17 1 3Z" fill="#2c7be8" stroke="#fff" strokeWidth="1.5" /><path d="M6 7 12 16 18 7" stroke="#fff" strokeWidth="3" /></Icon>
        <Icon size="size-4"><path d="M3 22Q3 5 22 2M9 22Q9 10 22 8M15 22Q15 15 22 14" stroke="#ddd" strokeWidth="1.8" /><circle cx="20" cy="20" r="2" fill="#fff" /></Icon>
        <Icon size="size-4"><path d="M7 7H22V19H7ZM3 1V6M7 1V6M1 6H9V10Q5 14 5 18" stroke="#fff" strokeWidth="1.8" /><path d="M10 10H19V16H10Z" fill="#fff" /></Icon>
        <Icon size="size-4"><path d="M2 9H6L12 3V21L6 15H2ZM15 8Q18 12 15 16M18 5Q23 12 18 19" stroke="#fff" strokeWidth="1.6" /></Icon>
        <Icon size="size-4"><circle cx="12" cy="12" r="10" fill="#8a8a8a" /><path d="M8 8 16 16M16 8 8 16" stroke="#222" strokeWidth="2.5" /></Icon>
        <Icon size="ml-1 size-4"><path d="M3 3 23 0 21 22 1 24Z" fill="#ea5320" /><path d="M17 6Q7 5 8 10 17 12 16 16 14 19 6 18" stroke="#fff" strokeWidth="3" /></Icon>
      </div>
      <div className="ml-3 w-[70px] text-center text-[12px] leading-[19px]">
        <div>13:08</div>
        <div>2019/1/12</div>
      </div>
      <button type="button" aria-label="通知" className="ml-1 flex h-10 w-[34px] items-center justify-center">
        <Icon size="size-[18px]"><path d="M2 2H22V18H16L12 22V18H2Z" fill="#fff" /><path d="M5 6H19M5 10H19M5 14H12" stroke="#333" strokeWidth="1.8" /><circle cx="19" cy="18" r="4" fill="#333" stroke="#fff" /></Icon>
      </button>
      <span className="mr-[3px] ml-3 h-10 w-px bg-[#777]" />
    </footer>
  );
}

export default function App() {
  return (
    <div className="flex h-screen flex-col overflow-hidden bg-[#f0f0f0] font-['Noto_Sans','Noto_Sans_CJK_SC',sans-serif] text-black">
      <TitleBar />
      <MenuBar />
      <TopToolbar />
      <div className="flex min-h-0 flex-1 border-t border-[#8a8a8a]">
        <LeftToolbar />
        <SidePanel />
        <Viewport />
        <RightToolbar />
      </div>
      <CommandBar />
      <div className="h-[27px] shrink-0 border-b-2 border-[#f4f4ec] bg-[#ffeaa4]" />
      <Taskbar />
    </div>
  );
}
